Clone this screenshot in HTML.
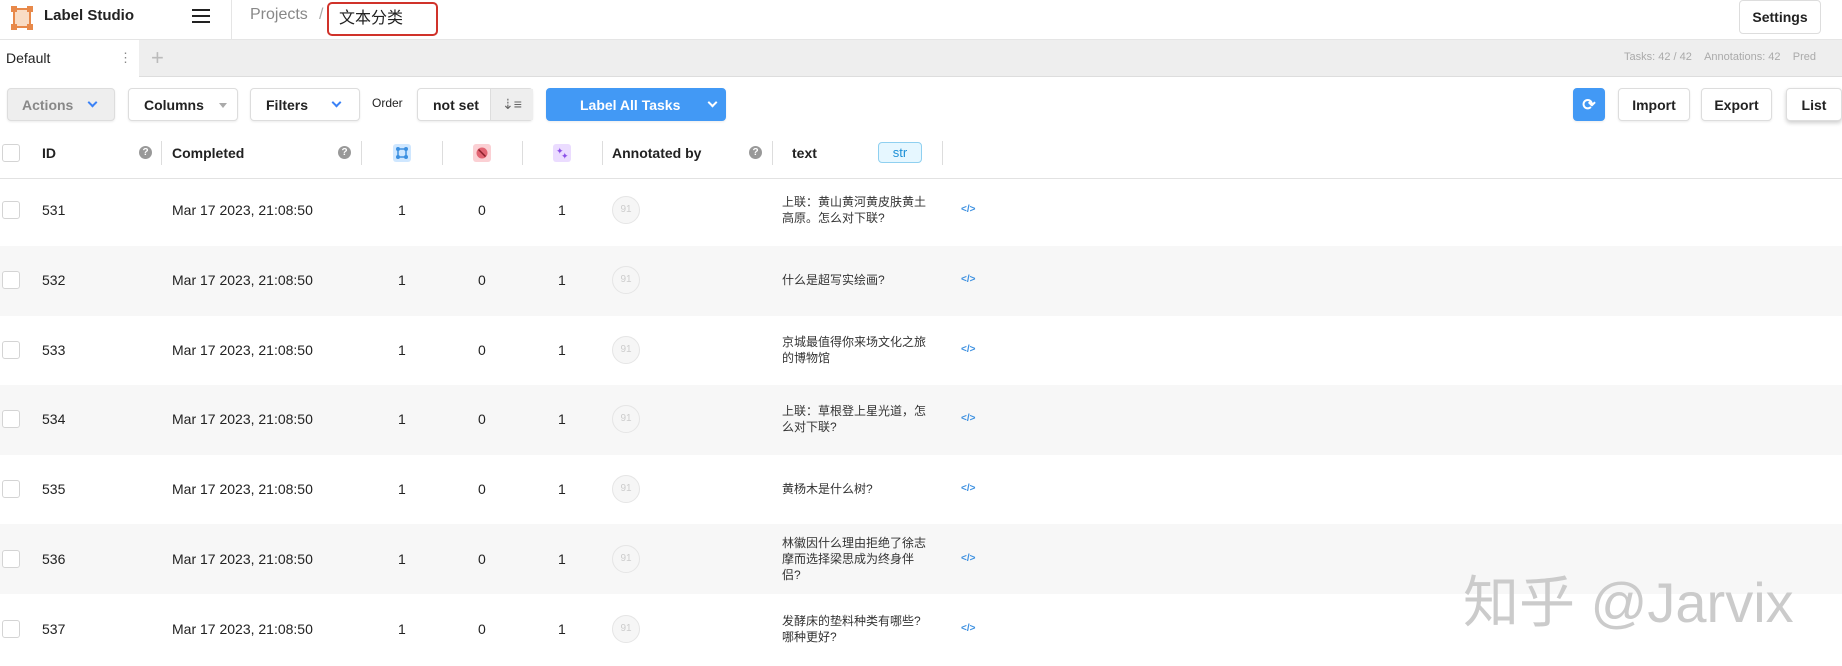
<!DOCTYPE html>
<html><head><meta charset="utf-8"><style>
*{box-sizing:border-box;margin:0;padding:0}
body{width:1842px;height:666px;overflow:hidden;background:#fff;font-family:"Liberation Sans","Noto Sans CJK SC",sans-serif;color:#222;position:relative;font-size:14px}
.a{position:absolute}
.btn{position:absolute;top:88px;height:33px;border:1px solid #ddd;border-radius:4px;background:#fff;display:flex;align-items:center;font-weight:bold;font-size:14px;box-shadow:0 1px 2px rgba(0,0,0,.08)}
.chev{position:absolute;width:7px;height:7px;border-right:2px solid #3b82f6;border-bottom:2px solid #3b82f6;transform:rotate(45deg)}
.div{position:absolute;top:141px;width:1px;height:24px;background:#ddd}
.q{position:absolute;top:146px;width:13px;height:13px;border-radius:50%;background:#999;color:#fff;font-size:10px;font-weight:bold;text-align:center;line-height:13px}
.row{position:absolute;left:0;width:1842px;height:70px}
.row.g{background:#f7f7f7}
.cb{position:absolute;left:2px;width:18px;height:18px;border:1px solid #d4d4d4;border-radius:3px;background:#fff}
.av{position:absolute;left:612px;width:28px;height:28px;border-radius:50%;border:1px solid #e5e5e5;background:#f6f6f6;color:#ccc;font-size:10px;text-align:center;line-height:26px}
.tx{position:absolute;left:782px;width:146px;font-size:12px;line-height:16px;color:#333}
.code{position:absolute;left:961px;color:#3b8fe0;font-size:10px;font-weight:bold}
</style></head><body>
<div class="a" style="left:0;top:0;width:1842px;height:40px;border-bottom:1px solid #e5e5e5"></div>
<svg class="a" style="left:11px;top:6px" width="22" height="24"><rect x="3" y="3" width="16" height="18" fill="#f9dcc4" stroke="#e8894a" stroke-width="2"/><rect x="0" y="0" width="6" height="6" fill="#e8894a"/><rect x="16" y="0" width="6" height="6" fill="#e8894a"/><rect x="0" y="18" width="6" height="6" fill="#e8894a"/><rect x="16" y="18" width="6" height="6" fill="#e8894a"/></svg>
<div class="a" style="left:44px;top:7px;font-weight:bold;font-size:15px">Label Studio</div>
<div class="a" style="left:192px;top:9px;width:18px;height:2px;background:#222;box-shadow:0 6px 0 #222,0 12px 0 #222"></div>
<div class="a" style="left:231px;top:0;width:1px;height:40px;background:#e5e5e5"></div>
<div class="a" style="left:250px;top:6px;font-size:16px;color:#888">Projects</div>
<div class="a" style="left:319px;top:6px;font-size:16px;color:#aaa">/</div>
<div class="a" style="left:327px;top:2px;width:111px;height:34px;border:2px solid #d0322a;border-radius:5px"></div>
<div class="a" style="left:339px;top:4px;font-size:16px">文本分类</div>
<div class="a" style="left:1739px;top:0;width:82px;height:34px;border:1px solid #ddd;border-radius:4px;font-weight:bold;font-size:14px;text-align:center;line-height:32px">Settings</div>
<div class="a" style="left:0;top:40px;width:1842px;height:37px;background:#eee;border-bottom:1px solid #ddd"></div>
<div class="a" style="left:0;top:40px;width:139px;height:38px;background:#fff"></div>
<div class="a" style="left:6px;top:50px;font-size:14px">Default</div>
<div class="a" style="left:119px;top:50px;font-size:13px;color:#888">⋮</div>
<div class="a" style="left:151px;top:45px;font-size:22px;color:#bbb;font-weight:300">+</div>
<div class="a" style="left:1624px;top:51px;font-size:11px;color:#aaa;white-space:nowrap">Tasks: 42 / 42&nbsp;&nbsp;&nbsp;&nbsp;Annotations: 42&nbsp;&nbsp;&nbsp;&nbsp;Pred</div>
<div class="btn" style="left:7px;width:108px;background:#eee;color:#888;padding-left:14px">Actions<div class="chev" style="left:81px;top:10px"></div></div>
<div class="btn" style="left:128px;width:110px;padding-left:15px">Columns<div class="a" style="left:90px;top:14px;border:4px solid transparent;border-top:5px solid #aaa"></div></div>
<div class="btn" style="left:250px;width:110px;padding-left:15px">Filters<div class="chev" style="left:82px;top:10px"></div></div>
<div class="a" style="left:372px;top:96px;font-size:12px">Order</div>
<div class="btn" style="left:417px;width:116px;padding-left:15px">not set<div class="a" style="left:72px;top:0;width:43px;height:31px;background:#eee;border-left:1px solid #ddd;color:#666;text-align:center;line-height:31px;font-weight:normal">⇣≡</div></div>
<div class="btn" style="left:546px;width:180px;background:#4299f5;border-color:#4299f5;color:#fff;padding-left:33px;font-size:14px">Label All Tasks<div class="a" style="left:162px;top:10px;width:7px;height:7px;border-right:2px solid #fff;border-bottom:2px solid #fff;transform:rotate(45deg)"></div></div>
<div class="btn" style="left:1573px;width:32px;background:#4299f5;border-color:#4299f5;color:#fff;justify-content:center;font-size:16px">⟳</div>
<div class="btn" style="left:1618px;width:72px;justify-content:center">Import</div>
<div class="btn" style="left:1701px;width:71px;justify-content:center">Export</div>
<div class="btn" style="left:1786px;width:56px;justify-content:center;box-shadow:0 2px 4px rgba(0,0,0,.2)">List</div>
<div class="a" style="left:0;top:178px;width:1842px;height:1px;background:#e2e2e2"></div>
<div class="cb" style="top:144px"></div>
<div class="a" style="left:42px;top:145px;font-weight:bold">ID</div>
<div class="q" style="left:139px">?</div><div class="div" style="left:161px"></div>
<div class="a" style="left:172px;top:145px;font-weight:bold">Completed</div>
<div class="q" style="left:338px">?</div><div class="div" style="left:361px"></div>
<svg class="a" style="left:393px;top:144px" width="18" height="18"><rect width="18" height="18" rx="3" fill="#cfe7ff"/><rect x="5" y="5" width="8" height="8" fill="none" stroke="#3b8fe0" stroke-width="1.5"/><circle cx="5" cy="5" r="2" fill="#3b8fe0"/><circle cx="13" cy="5" r="2" fill="#3b8fe0"/><circle cx="5" cy="13" r="2" fill="#3b8fe0"/><circle cx="13" cy="13" r="2" fill="#3b8fe0"/></svg>
<div class="div" style="left:442px"></div>
<svg class="a" style="left:473px;top:144px" width="18" height="18"><rect width="18" height="18" rx="3" fill="#fbd0d4"/><circle cx="9" cy="9" r="5.5" fill="#e26472"/><line x1="5.5" y1="5.5" x2="12.5" y2="12.5" stroke="#8a1f2a" stroke-width="1.5"/></svg>
<div class="div" style="left:522px"></div>
<svg class="a" style="left:553px;top:144px" width="18" height="18"><rect width="18" height="18" rx="3" fill="#ebdcff"/><text x="3" y="10" font-size="9" fill="#8b50e8">✦</text><text x="8" y="15" font-size="9" fill="#8b50e8">✦</text></svg>
<div class="div" style="left:602px"></div>
<div class="a" style="left:612px;top:145px;font-weight:bold">Annotated by</div>
<div class="q" style="left:749px">?</div><div class="div" style="left:772px"></div>
<div class="a" style="left:792px;top:145px;font-weight:bold">text</div>
<div class="a" style="left:878px;top:142px;width:44px;height:21px;border:1px solid #8fd0f0;background:#e6f7ff;border-radius:4px;color:#1d90d6;text-align:center;line-height:19px;font-size:13px">str</div>
<div class="div" style="left:942px"></div>
<div class="row" style="top:176px"></div>
<div class="row g" style="top:246px"></div>
<div class="row" style="top:316px"></div>
<div class="row g" style="top:385px"></div>
<div class="row" style="top:455px"></div>
<div class="row g" style="top:524px;height:70px"></div>
<div id="rows"></div>
<div class="a" style="left:1463px;top:558px;font-size:56px;color:#cbcbcb;white-space:nowrap">知乎 @Jarvix</div>
<script>
var d=[["531","上联：黄山黄河黄皮肤黄土高原。怎么对下联?",2],["532","什么是超写实绘画?",1],["533","京城最值得你来场文化之旅的博物馆",2],["534","上联：草根登上星光道，怎么对下联?",2],["535","黄杨木是什么树?",1],["536","林徽因什么理由拒绝了徐志摩而选择梁思成为终身伴侣?",3],["537","发酵床的垫料种类有哪些?哪种更好?",2]];
var cs=[210,280,350,419,489,559,629],h="";
d.forEach(function(r,i){var c=cs[i];var n=r[2];
h+='<div class="cb" style="top:'+(c-9)+'px"></div>'+
'<div class="a" style="left:42px;top:'+(c-8)+'px">'+r[0]+'</div>'+
'<div class="a" style="left:172px;top:'+(c-8)+'px">Mar 17 2023, 21:08:50</div>'+
'<div class="a" style="left:398px;top:'+(c-8)+'px">1</div>'+
'<div class="a" style="left:478px;top:'+(c-8)+'px">0</div>'+
'<div class="a" style="left:558px;top:'+(c-8)+'px">1</div>'+
'<div class="av" style="top:'+(c-14)+'px">91</div>'+
'<div class="tx" style="top:'+(c-n*8)+'px">'+r[1]+'</div>'+
'<div class="code" style="top:'+(c-6)+'px">&lt;/&gt;</div>';});
document.getElementById("rows").innerHTML=h;
</script>
</body></html>
